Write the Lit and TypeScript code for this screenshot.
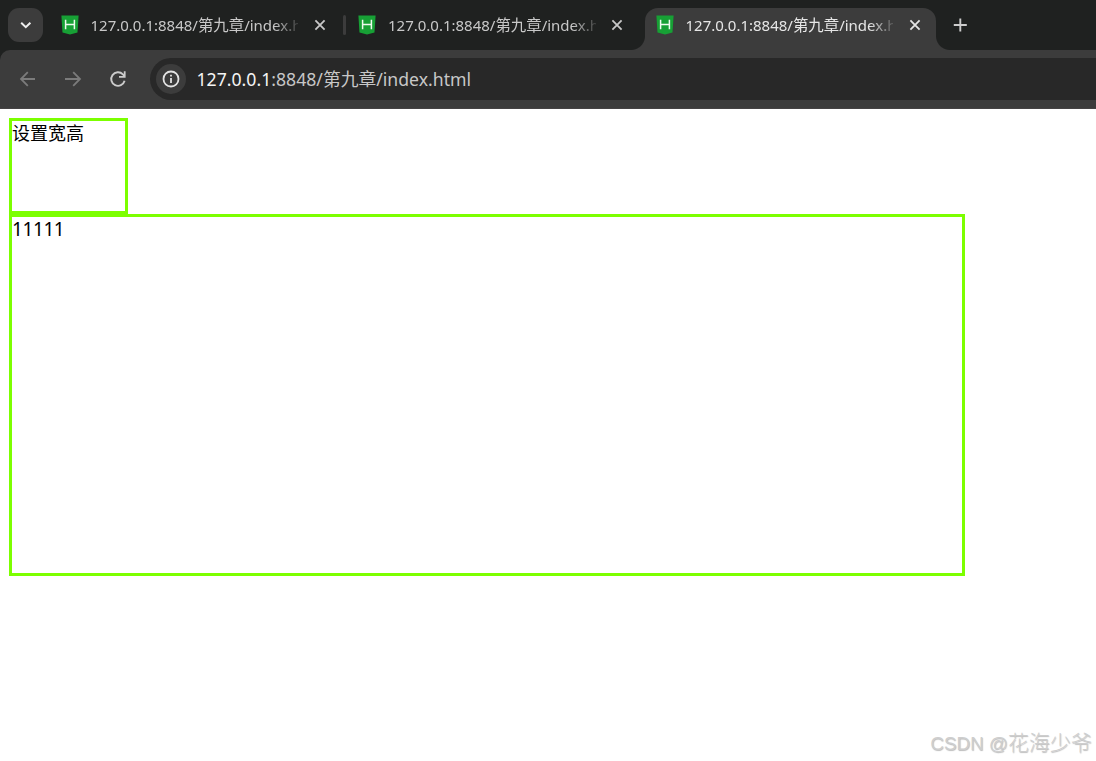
import { LitElement, html, svg, css } from "lit";
import { customElement, property } from "lit/decorators.js";

@customElement("browser-tab")
class BrowserTab extends LitElement {
  @property({ type: Boolean, reflect: true }) active = false;
  @property({ type: Boolean, reflect: true }) divider = false;

  static styles = css`
    :host { display: block; flex: none; width: 297.5px; height: 50px; position: relative; color: #c8c8c8; }
    :host([active]) { color: #e6e6e6; }
    .body { box-sizing: border-box; display: flex; align-items: center; width: 291px; height: 42.5px; margin-top: 7.5px; padding: 0 12px 7.5px 10.3px; }
    :host([active]) .body { background: #3c3c3c; border-radius: 13px 13px 0 0; }
    .icon { flex: none; width: 20px; height: 20px; }
    .title { flex: none; width: 208px; margin-left: 10.7px; margin-top: -1px; overflow: hidden; white-space: nowrap; font: 15px/24px "Noto Sans", sans-serif;
      -webkit-mask-image: linear-gradient(90deg, #000 184px, transparent 213px); mask-image: linear-gradient(90deg, #000 184px, transparent 213px); }
    .cjk { font-family: "Noto Sans CJK SC", sans-serif; font-size: 15.4px; line-height: 1; }
    .close { flex: none; width: 12px; height: 12px; margin-left: 15.5px; }
    .divider { position: absolute; right: 1.5px; top: 15px; width: 3px; height: 20px; border-radius: 2px; background: #3c3c3c; }
    .curve { position: absolute; bottom: 0; width: 14px; height: 14px; }
    .left { left: -14px; background: radial-gradient(circle at 0 0, transparent 13.5px, #3c3c3c 14.5px); }
    .right { left: 291px; background: radial-gradient(circle at 100% 0, transparent 13.5px, #3c3c3c 14.5px); }
  `;

  render() {
    return html`
      <div class="body">
        <svg class="icon" viewBox="0 0 20 20">
          <path d="M1.4 .4H18.6L17.5 17.4L10 19.6L2.5 17.4Z" fill="#17a035"/>
          <path d="M5.6 4.8V14.2M14.4 4.8V14.2M5.6 9.6H14.4" fill="none" stroke="#eefaee" stroke-width="1.5"/>
        </svg>
        <div class="title">127.0.0.1:8848/<span class="cjk">第九章</span>/index.html</div>
        <svg class="close" viewBox="0 0 12 12"><path d="M1.4 1.4L10.6 10.6M10.6 1.4L1.4 10.6" stroke="currentColor" stroke-width="1.8"/></svg>
      </div>
      ${this.divider ? html`<div class="divider"></div>` : ""}
      ${this.active ? html`<div class="curve left"></div><div class="curve right"></div>` : ""}
    `;
  }
}

@customElement("app-root")
class AppRoot extends LitElement {
  static styles = css`
    :host { display: flex; flex-direction: column; position: relative; width: 100%; height: 100vh; overflow: hidden; background: #fff; }
    svg { display: block; flex: none; }
    .strip { display: flex; flex: none; height: 50px; background: #1f2120; }
    .search { display: grid; place-items: center; flex: none; width: 35px; height: 34px; margin: 8px 6.5px 0 8px; border-radius: 11px; background: #3c3c3c; }
    .plus { margin: 18px 0 0 11px; }
    .toolwrap { flex: none; height: 59px; background: #1f2120; }
    .toolbar { box-sizing: border-box; display: flex; align-items: center; height: 59px; padding: 0 0 1px 17.5px; background: #3c3c3c; border-bottom: 1px solid #454344; border-top-left-radius: 10px; }
    .nav { width: 20px; height: 20px; margin-right: 25px; }
    .reload { margin-right: 22.5px; }
    .omnibox { display: flex; align-items: center; flex: 1; height: 42px; border-radius: 21px 0 0 21px; background: #282828; }
    .info { display: grid; place-items: center; width: 30px; height: 30px; margin-left: 6px; border-radius: 50%; background: #3c3c3c; }
    .url { margin-left: 10.5px; color: #c7c7c7; white-space: nowrap; font: 17.65px/28px "Noto Sans", sans-serif; }
    .host { color: #f4f4f4; }
    .cjk { font-family: "Noto Sans CJK SC", sans-serif; font-size: 17.8px; line-height: 1; }
    .page { flex: 1; padding: 9px 0 0 9px; color: #000; }
    .box { box-sizing: border-box; border: 3px solid #7cff00; }
    .small { width: 119px; height: 96px; font: 18px/22px "Noto Sans CJK SC", sans-serif; }
    .large { width: 956px; height: 362px; font: 19px/25px "Noto Sans", sans-serif; letter-spacing: -.4px; }
    .mark { position: absolute; right: 4px; bottom: 3px; color: #cecece; white-space: nowrap; font: 18.8px/28px "Liberation Sans", "Noto Sans CJK SC", sans-serif; text-shadow: .6px .6px 1px #bbb; }
    .name { font-family: "Noto Sans CJK SC", sans-serif; font-weight: 300; font-size: 21px; line-height: 1; }
  `;

  private stroke(d: string, color: string, width: number) {
    return svg`<path d=${d} fill="none" stroke=${color} stroke-width=${width}/>`;
  }

  render() {
    return html`
      <div class="strip">
        <div class="search"><svg width="12" height="12" viewBox="0 0 12 12">${this.stroke("M1.2 3.7L5.8 8.2L10.4 3.7", "#eeeeee", 2)}</svg></div>
        <browser-tab divider></browser-tab>
        <browser-tab></browser-tab>
        <browser-tab active></browser-tab>
        <svg class="plus" width="14" height="14" viewBox="0 0 14 14">${this.stroke("M7.3 .5V13.5M.8 7H13.8", "#cccccc", 1.9)}</svg>
      </div>
      <div class="toolwrap">
        <div class="toolbar">
          <svg class="nav" viewBox="0 0 20 20">${this.stroke("M17 10H3.4M9.8 3.2L3 10L9.8 16.8", "#7b7b7b", 1.8)}</svg>
          <svg class="nav" viewBox="0 0 20 20">${this.stroke("M2 10H16.6M10.2 3.2L17 10L10.2 16.8", "#7b7b7b", 1.8)}</svg>
          <svg class="nav reload" viewBox="0 0 20 20">
            ${this.stroke("M16.6 11.8A6.8 6.8 0 1 1 14.9 5.3L16.5 7", "#cccccc", 1.9)}
            <path d="M17.6 2.2V8.8H11V7H15.8V2.2Z" fill="#cccccc"/>
          </svg>
          <div class="omnibox">
            <div class="info"><svg width="18" height="18" viewBox="0 0 18 18">
              <circle cx="9" cy="9" r="7.5" fill="none" stroke="#e3e3e3" stroke-width="1.8"/>
              <path d="M8.1 8H9.9V13H8.1ZM8.1 4.7H9.9V6.5H8.1Z" fill="#e3e3e3"/>
            </svg></div>
            <div class="url"><span class="host">127.0.0.1</span>:8848/<span class="cjk">第九章</span>/index.html</div>
          </div>
        </div>
      </div>
      <div class="page">
        <div class="box small">设置宽高</div>
        <div class="box large">11111</div>
      </div>
      <div class="mark">CSDN @<span class="name">花海少爷</span></div>
    `;
  }
}
